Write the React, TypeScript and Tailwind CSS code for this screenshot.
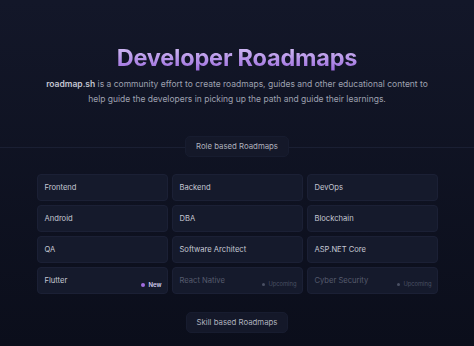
import React from 'react';

type Item = { name: string; tag?: 'new' | 'upcoming' };

const roles: Item[] = [
  { name: 'Frontend' },
  { name: 'Backend' },
  { name: 'DevOps' },
  { name: 'Android' },
  { name: 'DBA' },
  { name: 'Blockchain' },
  { name: 'QA' },
  { name: 'Software Architect' },
  { name: 'ASP.NET Core' },
  { name: 'Flutter', tag: 'new' },
  { name: 'React Native', tag: 'upcoming' },
  { name: 'Cyber Security', tag: 'upcoming' },
];

function Card({ item }: { item: Item }) {
  const dim = item.tag === 'upcoming';
  return (
    <div className="relative flex h-[27px] items-center rounded-[4px] border border-[#1b2035] bg-[#151a2c] px-[7px]">
      <span className={`text-[7.6px] ${dim ? 'text-[#555a6c]' : 'text-[#c5c8d3]'}`}>{item.name}</span>
      {item.tag === 'new' && (
        <span className="absolute bottom-[4px] right-[5px] flex items-center gap-[3px] text-[6px] font-semibold text-[#d4cdef]">
          <span className="h-[4px] w-[4px] rounded-full bg-[#a26ce0]" />
          New
        </span>
      )}
      {item.tag === 'upcoming' && (
        <span className="absolute bottom-[4px] right-[5px] flex items-center gap-[3px] text-[5.8px] text-[#4a5063]">
          <span className="h-[3px] w-[3px] rounded-full bg-[#4a5063]" />
          Upcoming
        </span>
      )}
    </div>
  );
}

function Badge({ label }: { label: string }) {
  return (
    <span className="relative z-10 flex h-[21px] items-center rounded-[5px] border border-[#171c2f] bg-[#141829] px-[10px] text-[7.8px] text-[#aeb1bd]">
      {label}
    </span>
  );
}

export default function App() {
  return (
    <div
      className="h-[346px] w-[474px] overflow-hidden bg-gradient-to-b from-[#131729] to-[#0b0e1b]"
      style={{ fontFamily: 'Inter, "Noto Sans", sans-serif' }}
    >
      <div className="flex flex-col items-center pt-[44px]">
        <h1 className="bg-gradient-to-b from-[#d8c5f5] to-[#9a66dc] bg-clip-text text-[23.5px] font-bold leading-[28px] tracking-[-0.2px] text-transparent">
          Developer Roadmaps
        </h1>
        <p className="mt-[5px] w-[400px] text-center text-[8.5px] leading-[15px] text-[#9ea1b0]">
          <span className="font-semibold text-[#c4c6d1]">roadmap.sh</span> is a community effort to create roadmaps, guides and other educational content to help guide the developers in picking up the path and guide their learnings.
        </p>
      </div>

      <div className="relative mt-[29px] flex justify-center">
        <div className="absolute left-0 right-0 top-1/2 h-px bg-[#1a1f33]" />
        <Badge label="Role based Roadmaps" />
      </div>

      <div className="mx-auto mt-[17px] grid w-[401px] grid-cols-3 gap-[4px]">
        {roles.map((r) => (
          <Card key={r.name} item={r} />
        ))}
      </div>

      <div className="mt-[18px] flex justify-center">
        <Badge label="Skill based Roadmaps" />
      </div>
    </div>
  );
}
